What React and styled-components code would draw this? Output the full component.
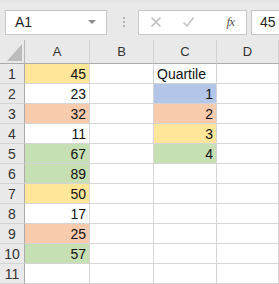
import React from "react";
import styled, { createGlobalStyle } from "styled-components";

const GlobalStyle = createGlobalStyle`
  body {
    margin: 0;
    background: #ffffff;
    font-family: "Liberation Sans", Arial, sans-serif;
  }
`;

const Sheet = styled.div`
  width: 279px;
  height: 284px;
  overflow: hidden;
  background: #fff;
`;

const FormulaBar = styled.div`
  display: flex;
  align-items: center;
  height: 40px;
  padding: 4px 0 0 5px;
  box-sizing: border-box;
  background: linear-gradient(#e2e2e2 0, #e9e9e9 4px, #e9e9e9 100%);
`;

const Box = styled.div`
  display: flex;
  align-items: center;
  box-sizing: border-box;
  height: 25px;
  width: ${(p) => p.w || "auto"};
  flex: ${(p) => (p.grow ? 1 : "none")};
  background: #fff;
  border: 1px solid #c6c6c6;
  border-right: ${(p) => (p.open ? "none" : "1px solid #c6c6c6")};
  padding: ${(p) => p.pad || "0 8px 0 9px"};
  font-size: 14px;
  color: #222;
`;

const Caret = styled.span`
  margin-left: auto;
  width: 0;
  height: 0;
  border-left: 4px solid transparent;
  border-right: 4px solid transparent;
  border-top: 4px solid #8a8a8a;
  margin-right: 2px;
`;

const Dots = styled.div`
  display: flex;
  flex-direction: column;
  gap: 2px;
  width: 31px;
  padding-left: 3px;
  box-sizing: border-box;
  align-items: center;
  span {
    width: 2px;
    height: 2px;
    background: #b4b4b4;
  }
`;

const IconSlot = styled.div`
  width: ${(p) => p.w}px;
  display: flex;
  justify-content: ${(p) => (p.end ? "flex-end" : "center")};
  padding-right: ${(p) => (p.end ? "12px" : "0")};
  box-sizing: border-box;
  color: #bdbdbd;
`;

const Fx = styled.span`
  font-family: "Liberation Serif", serif;
  font-style: italic;
  font-size: 13px;
  color: #555;
  letter-spacing: -1px;
`;

const Gap = styled.div`
  width: 4px;
`;

const Grid = styled.div`
  display: grid;
  grid-template-columns: 25px 65px 64px 63px 62px;
  grid-auto-rows: 20px;
  grid-template-rows: 24px;
`;

const ColHead = styled.div`
  display: flex;
  align-items: center;
  justify-content: center;
  background: #e9e9e9;
  border-right: 1px solid ${(p) => (p.corner ? "#b8b8b8" : "#d2d2d2")};
  border-bottom: 1px solid #ababab;
  font-size: 13px;
  color: #333;
  position: relative;
`;

const Corner = styled.div`
  position: absolute;
  right: 2px;
  bottom: 2px;
  width: 0;
  height: 0;
  border-left: 15px solid transparent;
  border-bottom: 17px solid #bcbcbc;
`;

const RowHead = styled.div`
  display: flex;
  align-items: center;
  justify-content: center;
  background: #e9e9e9;
  border-right: 1px solid #ababab;
  border-bottom: 1px solid #d4d4d4;
  font-size: 14px;
  color: #333;
`;

const Cell = styled.div`
  display: flex;
  align-items: center;
  justify-content: ${(p) => (p.left ? "flex-start" : "flex-end")};
  padding: 0 3px 0 3px;
  background: ${(p) => p.fill || "#fff"};
  border-right: 1px solid #d4d4d4;
  border-bottom: 1px solid #d4d4d4;
  font-size: 14px;
  color: #111;
  white-space: nowrap;
`;

const fills = {
  blue: "#b4c6e7",
  orange: "#f8cbad",
  yellow: "#ffe699",
  green: "#c6e0b4",
};

const colA = [
  [45, "yellow"],
  [23, null],
  [32, "orange"],
  [11, null],
  [67, "green"],
  [89, "green"],
  [50, "yellow"],
  [17, null],
  [25, "orange"],
  [57, "green"],
  [null, null],
];

const colC = [
  ["Quartile", null],
  [1, "blue"],
  [2, "orange"],
  [3, "yellow"],
  [4, "green"],
];

const XIcon = () => (
  <svg width="12" height="12" viewBox="0 0 12 12">
    <path d="M1.5 1.5 L10.5 10.5 M10.5 1.5 L1.5 10.5" stroke="#bdbdbd" strokeWidth="1.6" fill="none" />
  </svg>
);

const CheckIcon = () => (
  <svg width="13" height="12" viewBox="0 0 13 12">
    <path d="M1.5 6.5 L5 10 L11.5 1.5" stroke="#c4c4c4" strokeWidth="1.6" fill="none" />
  </svg>
);

export default function App() {
  return (
    <Sheet>
      <GlobalStyle />
      <FormulaBar>
        <Box w="102px">
          A1
          <Caret />
        </Box>
        <Dots>
          <span />
          <span />
          <span />
        </Dots>
        <Box w="109px" pad="0">
          <IconSlot w={34}>
            <XIcon />
          </IconSlot>
          <IconSlot w={30}>
            <CheckIcon />
          </IconSlot>
          <IconSlot w={43} end>
            <Fx>fx</Fx>
          </IconSlot>
        </Box>
        <Gap />
        <Box grow open pad="0 0 0 8px">
          45
        </Box>
      </FormulaBar>
      <Grid>
        <ColHead corner>
          <Corner />
        </ColHead>
        <ColHead>A</ColHead>
        <ColHead>B</ColHead>
        <ColHead>C</ColHead>
        <ColHead>D</ColHead>
        {colA.map(([v, f], i) => {
          const c = colC[i] || [null, null];
          return (
            <React.Fragment key={i}>
              <RowHead>{i + 1}</RowHead>
              <Cell fill={f && fills[f]}>{v}</Cell>
              <Cell />
              <Cell fill={c[1] && fills[c[1]]} left={typeof c[0] === "string"}>
                {c[0]}
              </Cell>
              <Cell />
            </React.Fragment>
          );
        })}
      </Grid>
    </Sheet>
  );
}
